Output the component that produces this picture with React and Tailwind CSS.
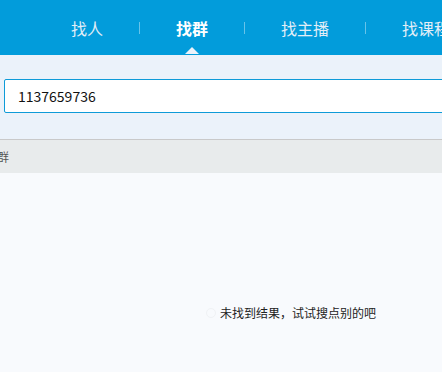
const tabs = ["找人", "找群", "找主播", "找课程"];

function App() {
  const active = 1;

  return (
    <div
      className="w-[442px] h-[372px] overflow-hidden bg-[#f8fafd] flex flex-col"
      style={{ fontFamily: '"Microsoft YaHei", "Noto Sans CJK SC", sans-serif' }}
    >
      <div className="h-[55px] shrink-0 bg-[#029cdb] flex items-center pl-[71px] gap-[36px] whitespace-nowrap">
        {tabs.map((t, i) => (
          <div key={t} className="flex items-center gap-[36px]">
            {i > 0 && <span className="w-px h-[12px] bg-white/40" />}
            <span
              className={
                "relative text-[16px] leading-[20px] " +
                (i === active ? "font-bold text-white" : "text-[#e3eef7]")
              }
            >
              {t}
              {i === active && (
                <span className="absolute left-1/2 -translate-x-1/2 top-[29px] w-0 h-0 border-l-[7px] border-r-[7px] border-b-[7px] border-l-transparent border-r-transparent border-b-[#ebf2fa]" />
              )}
            </span>
          </div>
        ))}
      </div>

      <div className="h-[85px] shrink-0 bg-[#ebf2fa] pt-[24px] pl-[4px] border-b border-[#c9c9c9]">
        <div className="h-[34px] w-[460px] bg-white border border-[#0e9bd8] rounded-[2px] flex items-center pl-[13px] text-[14px] text-[#111]">
          1137659736
        </div>
      </div>

      <div className="h-[33px] shrink-0 bg-[#e8ebec] flex items-center text-[12px] text-[#555]">
        <span className="-ml-[12px]">Q群</span>
      </div>

      <div className="flex-1 flex items-start justify-center pt-[131px] pl-[140px]">
        <div className="flex items-center gap-[4px] text-[12px] text-[#222]">
          <span className="w-[10px] h-[10px] rounded-full border border-[#f0f2f5]" />
          <span>未找到结果，试试搜点别的吧</span>
        </div>
      </div>
    </div>
  );
}

export default App;
